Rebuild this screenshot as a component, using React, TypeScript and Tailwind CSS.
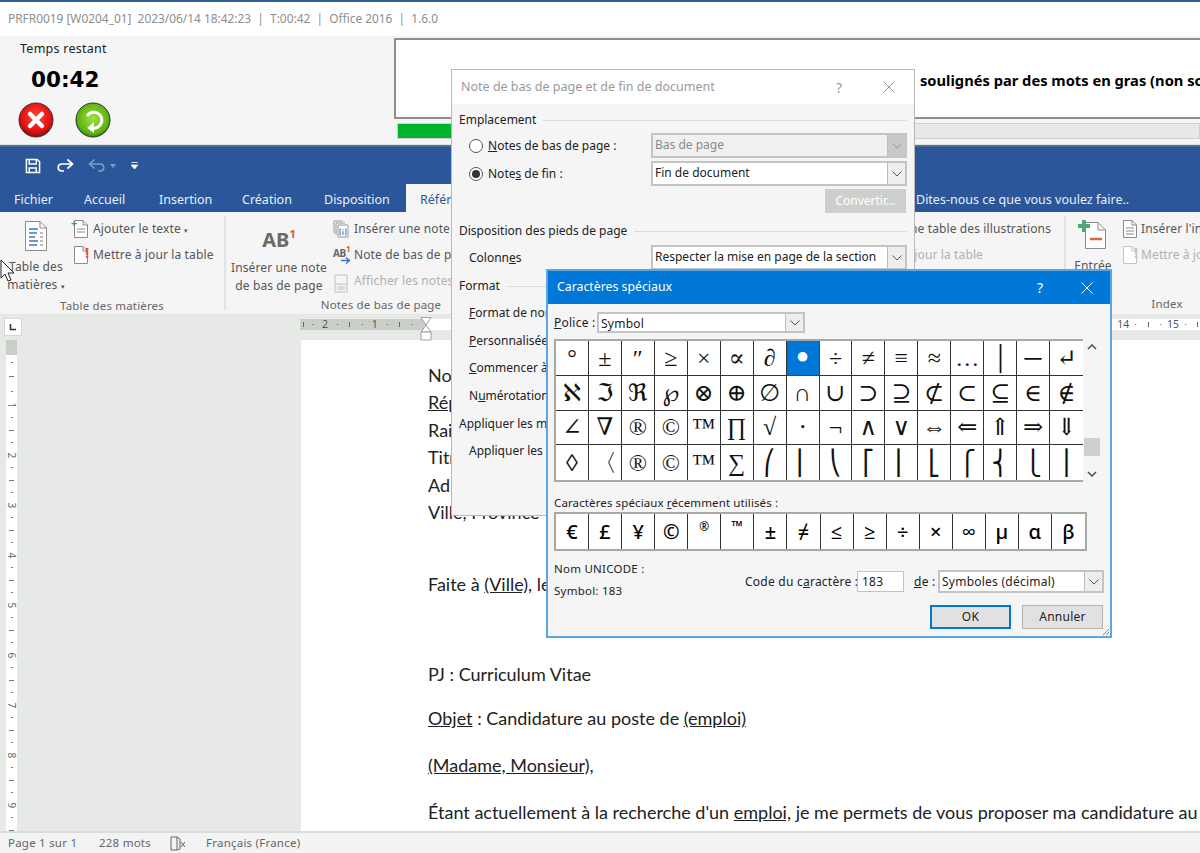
import React from "react";

const ui = "font-['Noto_Sans','Open_Sans',sans-serif]";

function Chevron({ color = "#555" }: { color?: string }) {
  return (
    <svg width="10" height="6" viewBox="0 0 10 6" fill="none">
      <path d="M0.5 0.5 L5 5 L9.5 0.5" stroke={color} strokeWidth="1" />
    </svg>
  );
}

function Select({ text, disabled, cls }: { text: string; disabled?: boolean; cls: string }) {
  return (
    <div className={`flex items-stretch border-2 ${disabled ? "border-[#c4c4c4] bg-[#f0f0f0] text-[#8a8a8a]" : "border-[#c4c4c4] bg-white text-[#222]"} ${cls}`}>
      <div className="flex-1 pl-[2px] leading-[20px] whitespace-nowrap overflow-hidden">{text}</div>
      <div className={`w-[18px] flex items-center justify-center border-l border-[#bdbdbd] ${disabled ? "bg-[#c8c8c8]" : "bg-[#eeeeee]"}`}>
        <Chevron color={disabled ? "#9a9a9a" : "#555"} />
      </div>
    </div>
  );
}

function SectionTitle({ text, cls = "" }: { text: string; cls?: string }) {
  return (
    <div className={`flex items-center gap-[7px] pl-[7px] pr-[7px] h-[16px] ${cls}`}>
      <span className="whitespace-nowrap text-[#222]">{text}</span>
      <span className="flex-1 h-px bg-[#dcdcdc]" />
    </div>
  );
}

const rows = [
  ["°", "±", "″", "≥", "×", "∝", "∂", "•", "÷", "≠", "≡", "≈", "…", "│", "─", "↵"],
  ["ℵ", "ℑ", "ℜ", "℘", "⊗", "⊕", "∅", "∩", "∪", "⊃", "⊇", "⊄", "⊂", "⊆", "∈", "∉"],
  ["∠", "∇", "®", "©", "™", "∏", "√", "⋅", "¬", "∧", "∨", "⇔", "⇐", "⇑", "⇒", "⇓"],
  ["◊", "〈", "®", "©", "™", "∑", "⎛", "⎜", "⎝", "⎡", "⎢", "⎣", "⎧", "⎨", "⎩", "⎪"],
];
const recent = ["€", "£", "¥", "©", "®", "™", "±", "≠", "≤", "≥", "÷", "×", "∞", "µ", "α", "β"];

function FileSvg({ w = 18, h = 20, stroke = "#8a8a8a", children }: { w?: number; h?: number; stroke?: string; children?: React.ReactNode }) {
  return (
    <svg width={w} height={h} viewBox="0 0 18 20" fill="none">
      <path d="M2.5 1.5 H11 L15.5 6 V18.5 H2.5 Z" fill="#fff" stroke={stroke} />
      <path d="M11 1.5 V6 H15.5" stroke={stroke} />
      {children}
    </svg>
  );
}

function RowItem({ icon, text, dim }: { icon: React.ReactNode; text: React.ReactNode; dim?: boolean }) {
  return (
    <div className={`flex items-center h-[26px] whitespace-nowrap ${dim ? "text-[#b0b0b0]" : "text-[#555]"}`}>
      {icon}
      <span>{text}</span>
    </div>
  );
}

function HRulerCell({ n }: { n: string }) {
  return (
    <div className="w-[49.86px] shrink-0 flex items-center text-[10.5px] leading-none">
      <span className="w-[12.5px] text-center">{n}</span>
      <span className="w-[12.5px] text-center text-[8px]">·</span>
      <span className="w-[12.5px] flex justify-center"><i className="w-px h-[5px] bg-[#666]" /></span>
      <span className="w-[12.5px] text-center text-[8px]">·</span>
    </div>
  );
}

function VRulerCell({ n }: { n: string }) {
  return (
    <div className="h-[50px] shrink-0 flex flex-col items-center text-[10px] leading-none text-[#666]">
      <span className="h-[12.5px] flex items-center justify-center rotate-90">{n}</span>
      <span className="h-[12.5px] flex items-center"><i className="w-[2px] h-[1px] bg-[#777]" /></span>
      <span className="h-[12.5px] flex items-center"><i className="w-[5px] h-[1px] bg-[#777]" /></span>
      <span className="h-[12.5px] flex items-center"><i className="w-[2px] h-[1px] bg-[#777]" /></span>
    </div>
  );
}

export default function App() {
  return (
    <div className={`relative w-[1200px] h-[853px] overflow-hidden flex flex-col bg-white ${ui}`}>
      {/* test tool title */}
      <div className="h-[36px] shrink-0 bg-white border-t-2 border-[#2f5f93] pl-[8px] text-[11.9px] leading-[32px] text-[#8e8e8e] whitespace-nowrap">
        PRFR0019 [W0204_01]&nbsp; 2023/06/14 18:42:23&nbsp; |&nbsp; T:00:42&nbsp; |&nbsp; Office 2016&nbsp; |&nbsp; 1.6.0
      </div>

      {/* timer + instruction */}
      <div className="h-[109px] shrink-0 bg-[#f5f5f5] flex border-b border-[#dfe3e0]">
        <div className="w-[394px] shrink-0 pl-[20px] pt-[5px]">
          <div className="text-[12.5px] leading-[16px] text-[#222] tracking-[0.02em]">Temps restant</div>
          <div className="pl-[11px] mt-[8px] text-[21.5px] leading-[30px] font-bold text-black font-['DejaVu_Sans',sans-serif]">00:42</div>
          <div className="flex gap-[21px] -ml-[2px] mt-[7px]">
            <svg width="36" height="36" viewBox="0 0 36 36">
              <defs>
                <radialGradient id="rg" cx="50%" cy="40%" r="60%">
                  <stop offset="0%" stopColor="#ff4a3a" />
                  <stop offset="75%" stopColor="#e00f0f" />
                  <stop offset="100%" stopColor="#8a0b0b" />
                </radialGradient>
              </defs>
              <circle cx="18" cy="18" r="17" fill="url(#rg)" stroke="#333" />
              <path d="M12 12 L24 24 M24 12 L12 24" stroke="#fff" strokeWidth="4.5" strokeLinecap="round" />
            </svg>
            <svg width="36" height="36" viewBox="0 0 36 36" fill="none">
              <defs>
                <radialGradient id="gg" cx="50%" cy="45%" r="60%">
                  <stop offset="0%" stopColor="#a6dd45" />
                  <stop offset="75%" stopColor="#5cb40f" />
                  <stop offset="100%" stopColor="#1f6a10" />
                </radialGradient>
              </defs>
              <circle cx="18" cy="18" r="17" fill="url(#gg)" stroke="#333" />
              <path d="M12 14 A8 8 0 1 1 17 26" stroke="#fff" strokeWidth="3" />
              <path d="M19 20 L19 31 L12 26 Z" fill="#fff" />
            </svg>
          </div>
        </div>
        <div className="flex-1 min-w-0 pt-[2px]">
          <div className="h-[81px] bg-white border-2 border-r-0 border-[#8f8f8f] flex items-center overflow-hidden">
            <span className="pl-[524px] pt-[4px] text-[14.7px] font-bold text-black whitespace-nowrap">soulignés par des mots en gras (non soulignés)</span>
          </div>
          <div className="mt-[4px] ml-[3px] h-[16px] bg-[#e6e9e6] border border-[#d0d0d0]">
            <div className="w-[80px] h-full bg-[#00b32c]" />
          </div>
        </div>
      </div>

      {/* Word blue header */}
      <div className="h-[67px] shrink-0 bg-[#2b579a] border-t-2 border-[#4a6f9f] flex flex-col text-white">
        <div className="h-[37px] flex items-center pl-[25px]">
          <svg width="16" height="16" viewBox="0 0 17 17" fill="none" stroke="#fff" strokeWidth="1.6">
            <path d="M1.5 1.5 H13 L15.5 4 V15.5 H1.5 Z" />
            <path d="M4.5 1.5 V6.5 H12 V1.5" />
            <path d="M4.5 15.5 V10.5 H12 V15.5" />
          </svg>
          <svg className="ml-[15px]" width="18" height="15" viewBox="0 0 18 15" fill="none" stroke="#fff" strokeWidth="1.7">
            <path d="M16 6 H6 C1 6 1 13 6 13 H8" />
            <path d="M11.5 1.5 L16.5 6 L11.5 10.5" />
          </svg>
          <svg className="ml-[14px]" width="18" height="15" viewBox="0 0 18 15" fill="none" stroke="#7f9cc6" strokeWidth="1.6">
            <path d="M2 6 H12 C17 6 17 13 12 13 H10" />
            <path d="M6.5 1.5 L1.5 6 L6.5 10.5" />
          </svg>
          <svg className="ml-[4px]" width="6" height="4" viewBox="0 0 6 4"><path d="M0 0 H6 L3 4 Z" fill="#7f9cc6" /></svg>
          <svg className="ml-[15px]" width="7" height="7" viewBox="0 0 7 7"><path d="M0.5 0.5 H6.5 M0 3 H7 L3.5 7 Z" stroke="#fff" fill="#fff" strokeWidth="0.8" /></svg>
        </div>
        <div className="flex-1 flex items-stretch text-[12.5px] text-[#e8eef7]">
          <div className="flex items-center pl-[14px] pt-[4px] w-[84px]">Fichier</div>
          <div className="flex items-center pt-[4px] w-[75px]">Accueil</div>
          <div className="flex items-center pt-[4px] w-[83px]">Insertion</div>
          <div className="flex items-center pt-[4px] w-[82px]">Création</div>
          <div className="flex items-center pt-[4px] w-[82px]">Disposition</div>
          <div className="flex items-center pl-[14px] pt-[4px] w-[180px] bg-[#f5f5f5] text-[#2b579a]">Références</div>
          <div className="flex items-center pl-[330px] pt-[4px] whitespace-nowrap">Dites-nous ce que vous voulez faire..</div>
        </div>
      </div>

      {/* Ribbon */}
      <div className="h-[103px] w-[1268px] shrink-0 bg-[#f5f5f5] flex text-[12px] tracking-[0.01em] text-[#555] border-b border-[#e3e6e3]">
        {/* TOC */}
        <div className="w-[226px] shrink-0 flex flex-col border-r-2 border-[#e2e2e2] my-[4px]">
          <div className="flex-1 flex">
            <div className="w-[72px] flex flex-col items-center pt-[4px]">
              <svg width="26" height="33" viewBox="0 0 26 33" fill="none">
                <path d="M2.5 1.5 H17 L23.5 8 V30.5 H2.5 Z" fill="#fff" stroke="#8a8a8a" />
                <path d="M17 1.5 V8 H23.5" stroke="#8a8a8a" />
                <path d="M6 9 H15 M6 13 H14 M6 17 H12 M6 21 H15 M6 25 H14" stroke="#3f77bd" strokeWidth="1.5" />
                <path d="M17 13 H20 M17 17 H20 M17 21 H20 M17 25 H20" stroke="#777" />
              </svg>
              <div className="mt-[5px] leading-[18px] text-center whitespace-nowrap">Table des<br />matières <span className="text-[7px]">▾</span></div>
            </div>
            <div>
              <RowItem
                icon={<span className="relative w-[21px]"><FileSvg><path d="M5 10 H13 M5 13 H13" stroke="#8a8a8a" /></FileSvg><span className="absolute -top-[2px] -left-[1px] text-[#3f9c63] text-[11px] font-bold leading-none">+</span></span>}
                text={<>Ajouter le texte <span className="text-[7px]">▾</span></>}
              />
              <RowItem
                icon={<span className="relative w-[21px]"><FileSvg /><span className="absolute top-[0px] left-[13px] text-[#e0533a] text-[15px] font-bold leading-none">!</span></span>}
                text="Mettre à jour la table"
              />
            </div>
          </div>
          <div className="h-[16px] text-center text-[11.5px] leading-[20px] tracking-[0.015em] text-[#666]">Table des matières</div>
        </div>
        {/* Notes */}
        <div className="w-[310px] shrink-0 flex flex-col my-[4px]">
          <div className="flex-1 flex">
            <div className="w-[106px] flex flex-col items-center pt-[11px]">
              <div className="h-[26px] flex items-start font-bold text-[20px] leading-[26px] text-[#6a6a6a] tracking-normal">
                AB<span className="text-[11px] leading-[14px] text-[#e0533a]">1</span>
              </div>
              <div className="mt-[6px] leading-[18px] text-center whitespace-nowrap">Insérer une note<br />de bas de page</div>
            </div>
            <div className="pl-[1px]">
              <RowItem
                icon={<svg className="mr-[4px]" width="17" height="18" viewBox="0 0 17 18" fill="none"><path d="M1 1 H10 M3 3 H12 M1 1 V13 M3 3 V15" stroke="#9a9a9a" /><path d="M5 5 H15 V17 H5 Z" fill="#fff" stroke="#9a9a9a" /><path d="M8 9 H7 V15 H8 M12 9 H13 V15 H12 M10 9 V10 M10 11 V15" stroke="#3f77bd" /></svg>}
                text="Insérer une note de fin"
              />
              <RowItem
                icon={<span className="relative w-[21px] h-[18px] text-[10px] font-bold leading-[14px] tracking-tighter text-[#666]">AB<span className="absolute -top-[1px] left-[13px] text-[8px] leading-none text-[#e0533a]">1</span><svg className="absolute left-[8px] top-[11px]" width="10" height="7" viewBox="0 0 10 7" fill="none"><path d="M0 3.5 H8 M5 .5 L8.5 3.5 L5 6.5" stroke="#3f77bd" strokeWidth="1.4" /></svg></span>}
                text="Note de bas de page suivante"
              />
              <RowItem
                dim
                icon={<svg className="mr-[4px] mt-[4px]" width="17" height="19" viewBox="0 0 17 19" fill="none" stroke="#c0c0c0"><path d="M2 1 H14 V18 H2 Z" /><path d="M2 10 H14 M4 13 H12 M4 15 H12" /></svg>}
                text="Afficher les notes"
              />
            </div>
          </div>
          <div className="h-[16px] text-center text-[11.5px] leading-[20px] tracking-[0.015em] text-[#666]">Notes de bas de page</div>
        </div>
        {/* Captions */}
        <div className="flex-1 min-w-0 flex flex-col items-end my-[4px] pr-[13px] border-r-2 border-[#e2e2e2] whitespace-nowrap">
          <div className="h-[26px] leading-[26px]">Insérer une table des illustrations</div>
          <div className="h-[26px] leading-[26px] pr-[68px] text-[#b0b0b0]">Mettre à jour la table</div>
        </div>
        {/* Index */}
        <div className="w-[202px] shrink-0 flex flex-col my-[4px] overflow-hidden">
          <div className="flex-1 flex whitespace-nowrap">
            <div className="w-[54px] shrink-0 flex flex-col items-center pt-[2px]">
              <svg width="32" height="34" viewBox="0 0 32 34" fill="none">
                <path d="M8.5 4.5 H21 L28.5 12 V30.5 H8.5 Z" fill="#fff" stroke="#8a8a8a" />
                <path d="M21 4.5 V12 H28.5" stroke="#8a8a8a" />
                <path d="M1 8 H13 M7 2 V14" stroke="#4fa67a" strokeWidth="4" />
                <path d="M13 21 H25" stroke="#e0623f" strokeWidth="2.5" />
              </svg>
              <div className="mt-[5px] leading-[18px]">Entrée</div>
            </div>
            <div className="pl-[1px]">
              <RowItem icon={<span className="w-[20px]"><FileSvg><path d="M5 9 H13 M5 12 H13 M5 15 H13" stroke="#8a8a8a" /></FileSvg></span>} text="Insérer l'index" />
              <RowItem dim icon={<span className="relative w-[20px]"><FileSvg stroke="#c4c4c4" /><span className="absolute top-[1px] left-[13px] text-[#c4c4c4] text-[14px] font-bold leading-none">!</span></span>} text="Mettre à jour l'index" />
            </div>
          </div>
          <div className="h-[16px] text-center text-[11.5px] leading-[20px] tracking-[0.015em] text-[#666]">Index</div>
        </div>
      </div>

      {/* Ruler row */}
      <div className="h-[25px] shrink-0 bg-[#e6e9e6] flex text-[#555] relative">
        <div className="w-[300px] shrink-0 pl-[4px] pt-[3px]">
          <div className="w-[18px] h-[18px] bg-white border border-[#d8d8d8] flex items-center justify-center">
            <svg width="8" height="8" viewBox="0 0 8 8" fill="none"><path d="M1.5 1 V6.5 H7" stroke="#333" strokeWidth="1.6" /></svg>
          </div>
        </div>
        <div className="flex-1 min-w-0 flex items-start pt-[4px] overflow-hidden">
          <div className="w-[125px] h-[11px] shrink-0 bg-[#c9cec9] flex items-center overflow-hidden">
            <span className="w-[6.75px] flex justify-center"><i className="w-px h-[5px] bg-[#666]" /></span>
            <span className="w-[12px] text-center text-[8px] leading-none">·</span>
            <HRulerCell n="2" />
            <HRulerCell n="1" />
          </div>
          <div className="h-[11px] flex-1 bg-white flex items-center overflow-hidden">
            <div className="w-[43.75px] shrink-0" />
            {Array.from({ length: 15 }, (_, i) => <HRulerCell key={i} n={String(i + 1)} />)}
          </div>
        </div>
        <svg className="absolute left-[420px] top-[2px]" width="12" height="24" viewBox="0 0 12 24" fill="#fff" stroke="#a0a0a0">
          <path d="M1 .5 H11 L6 8 Z" />
          <path d="M1 15 L6 8 L11 15 Z" />
          <path d="M1 15 H11 V23 H1 Z" />
        </svg>
      </div>

      {/* Document */}
      <div className="flex-1 min-h-0 flex bg-[#e6e9e6] overflow-hidden">
        <div className="w-[301px] shrink-0 pl-[6px]">
          <div className="w-[11px] h-full bg-white overflow-hidden">
            <div className="h-[15px] bg-[#c9cec9]" />
            <div className="flex flex-col">
              <div className="h-[44px] shrink-0 flex flex-col items-center justify-around">
                <i className="w-[2px] h-px bg-[#777]" /><i className="w-[5px] h-px bg-[#777]" /><i className="w-[2px] h-px bg-[#777]" />
              </div>
              {Array.from({ length: 10 }, (_, i) => <VRulerCell key={i} n={String(i + 1)} />)}
            </div>
          </div>
        </div>
        <div className="flex-1 bg-white pl-[127px] pt-[22px] font-['Lato','Liberation_Sans',sans-serif] text-[18px] leading-[27.4px] text-[#222] whitespace-nowrap overflow-hidden">
          <div>Nom Prénom</div>
          <div><u>Réponse à l'annonce</u></div>
          <div>Raison sociale</div>
          <div>Titre</div>
          <div>Adresse</div>
          <div>Ville, Province</div>
          <div className="mt-[45px]">Faite à <u>(Ville),</u> le (date)</div>
          <div className="mt-[62px]">PJ : Curriculum Vitae</div>
          <div className="mt-[17px]"><u>Objet</u> : Candidature au poste de <u>(emploi)</u></div>
          <div className="mt-[19px]"><u>(Madame, Monsieur),</u></div>
          <div className="mt-[20px]">Étant actuellement à la recherche d'un <u>emploi,</u> je me permets de vous proposer ma candidature au</div>
          <div>poste de (emploi).</div>
        </div>
      </div>

      {/* Status bar */}
      <div className="h-[22px] shrink-0 bg-[#f3f3f3] border-t-2 border-[#d9dcd9] flex items-center text-[11.5px] tracking-[0.02em] text-[#666]">
        <span className="ml-[8px] w-[91px]">Page 1 sur 1</span>
        <span className="w-[71px]">228 mots</span>
        <svg width="16" height="15" viewBox="0 0 16 15" fill="none" stroke="#666"><path d="M1 1 H7 V14 H1 Z M7 1 L10 3 V13 L7 14" /><path d="M11 6 L15 11 M15 6 L11 11" /></svg>
        <span className="ml-[20px]">Français (France)</span>
      </div>

      {/* Notes dialog */}
      <div className="absolute left-[451px] top-[69px] w-[464px] h-[447px] border border-[#b9b9b9] bg-[#f5f5f5] text-[12px] text-[#222] flex flex-col overflow-hidden">
        <div className="h-[34px] shrink-0 bg-white flex items-center pl-[9px] text-[12.5px] text-[#9a9a9a]">
          <span className="flex-1">Note de bas de page et de fin de document</span>
          <span className="w-[14px] text-[14px] text-[#999]">?</span>
          <svg className="ml-[33px] mr-[19px]" width="12" height="12" viewBox="0 0 12 12" stroke="#999"><path d="M.5 .5 L11.5 11.5 M11.5 .5 L.5 11.5" /></svg>
        </div>
        <SectionTitle text="Emplacement" cls="mt-[8px]" />
        <div className="flex items-center mt-[5px] h-[25px] pl-[17px] pr-[7px]">
          <span className="w-[14px] h-[14px] rounded-full border border-[#555] bg-white" />
          <span className="ml-[5px] flex-1"><u>N</u>otes de bas de page :</span>
          <Select disabled text="Bas de page" cls="w-[256px] h-[25px]" />
        </div>
        <div className="flex items-center mt-[3px] h-[25px] pl-[17px] pr-[7px]">
          <span className="w-[14px] h-[14px] rounded-full border border-[#555] bg-white flex items-center justify-center"><i className="w-[8px] h-[8px] rounded-full bg-[#333]" /></span>
          <span className="ml-[5px] flex-1">Note<u>s</u> de fin :</span>
          <Select text="Fin de document" cls="w-[256px] h-[25px]" />
        </div>
        <div className="flex justify-end mt-[3px] pr-[8px]">
          <div className="w-[81px] h-[24px] bg-[#cdcfcd] text-white text-center leading-[24px]">Convertir...</div>
        </div>
        <SectionTitle text="Disposition des pieds de page" cls="mt-[10px]" />
        <div className="flex items-center mt-[6px] h-[25px] pl-[17px] pr-[7px]">
          <span className="flex-1">Colonn<u>e</u>s</span>
          <Select text="Respecter la mise en page de la section" cls="w-[256px] h-[25px]" />
        </div>
        <SectionTitle text="Format" cls="mt-[8px]" />
        <div className="pl-[17px] mt-[11px] leading-[16px] flex flex-col gap-[11.5px]">
          <span><u>F</u>ormat de nombre :</span>
          <span><u>P</u>ersonnalisée :</span>
          <span><u>C</u>ommencer à :</span>
          <span>N<u>u</u>mérotation :</span>
        </div>
        <div className="pl-[7px] mt-[12px] leading-[16px] whitespace-nowrap">Appliquer les modifications</div>
        <div className="pl-[17px] mt-[11px] leading-[16px] whitespace-nowrap">Appliquer les modifications à :</div>
      </div>

      {/* Symbols dialog */}
      <div className="absolute left-[546px] top-[269px] w-[566px] h-[369px] border-2 border-[#5ba6e2] bg-[#f5f5f5] text-[12px] tracking-[0.02em] text-[#222] flex flex-col">
        <div className="h-[33px] shrink-0 bg-[#0078d7] text-white flex items-center pl-[9px] text-[12.3px] tracking-normal">
          <span className="flex-1">Caractères spéciaux</span>
          <span className="w-[14px] text-[14px]">?</span>
          <svg className="ml-[30px] mr-[17px]" width="12" height="12" viewBox="0 0 12 12" stroke="#fff"><path d="M.5 .5 L11.5 11.5 M11.5 .5 L.5 11.5" /></svg>
        </div>
        <div className="flex items-center pl-[6px] mt-[8px] h-[21px]">
          <span className="w-[43px]"><u>P</u>olice :</span>
          <Select text="Symbol" cls="w-[208px] h-[21px]" />
        </div>
        <div className="flex mt-[6px] pl-[6px]">
          <div className="w-[529px] h-[143px] border-t-2 border-l-2 border-b-2 border-[#a8a8a8] bg-white grid grid-cols-[repeat(16,1fr)] grid-rows-[repeat(4,1fr)] font-['Liberation_Serif','DejaVu_Sans_ExtraLight','DejaVu_Serif','DejaVu_Sans',serif] text-[24px] text-[#111] tracking-normal overflow-hidden">
            {rows.flatMap((row, r) =>
              row.map((ch, c) => {
                const sel = r === 0 && c === 7;
                return (
                  <div
                    key={`${r}-${c}`}
                    className={`flex items-center justify-center overflow-hidden leading-none ${r < 3 ? "border-b" : ""} ${c < 15 ? "border-r" : ""} border-[#333] ${sel ? "bg-[#0078d7] text-white text-[40px] outline-1 outline-dotted -outline-offset-1 outline-[#7a4a1a]" : ""}`}
                  >
                    {ch}
                  </div>
                );
              })
            )}
          </div>
          <div className="w-[18px] h-[143px] flex flex-col items-center pt-[5px]">
            <svg width="10" height="6" viewBox="0 0 10 6" fill="none"><path d="M1 5 L5 1 L9 5" stroke="#555" strokeWidth="1.6" /></svg>
            <div className="w-[16px] h-[18px] shrink-0 bg-[#cdd0cd] mt-[88px]" />
            <svg className="mt-[15px] shrink-0" width="10" height="6" viewBox="0 0 10 6" fill="none"><path d="M1 1 L5 5 L9 1" stroke="#555" strokeWidth="1.6" /></svg>
          </div>
        </div>
        <div className="pl-[6px] mt-[13px] h-[16px] leading-[16px] text-[11.5px] tracking-[0.01em]">Caractères spéciaux <u>r</u>écemment utilisés :</div>
        <div className="ml-[6px] mt-[1px] w-[533px] h-[39px] border-2 border-[#a8a8a8] bg-white grid grid-cols-[repeat(16,1fr)] text-[20px] font-medium tracking-normal text-black">
          {recent.map((ch, i) => (
            <div key={i} className={`flex items-center justify-center ${i === 4 ? "text-[12px] pb-[10px]" : ""} ${i === 5 ? "text-[15px] pb-[10px]" : ""} ${i < 15 ? "border-r border-[#333]" : ""}`}>{ch}</div>
          ))}
        </div>
        <div className="flex pl-[6px] mt-[7px]">
          <div className="w-[191px] text-[11.5px] leading-[22px]">
            <div>Nom UNICODE :</div>
            <div>Symbol: 183</div>
          </div>
          <div className="flex items-center h-[21px] mt-[13px] whitespace-nowrap">
            <span className="w-[112px]">Code du c<u>a</u>ractère :</span>
            <div className="w-[47px] h-[21px] bg-white border border-[#c4c4c4] pl-[4px] leading-[19px]">183</div>
            <span className="ml-[10px] w-[24px]"><u>d</u>e :</span>
            <Select text="Symboles (décimal)" cls="w-[166px] h-[23px]" />
          </div>
        </div>
        <div className="flex justify-end gap-[11px] pr-[7px] mt-[3px]">
          <div className="w-[81px] h-[24px] border-2 border-[#0078d7] bg-[#e1e1e1] text-center leading-[20px]">OK</div>
          <div className="w-[81px] h-[24px] border border-[#b5b5b5] bg-[#e1e1e1] text-center leading-[22px]">Annuler</div>
        </div>
        <svg className="absolute right-0 bottom-0" width="10" height="10" viewBox="0 0 10 10" stroke="#8a8a8a"><path d="M9 3 L3 9 M9 6 L6 9" /></svg>
      </div>

      {/* mouse cursor */}
      <svg className="absolute left-0 top-[259px]" width="16" height="26" viewBox="0 0 16 26">
        <path d="M1 1 V19 L5 15 L8 22 L11 21 L8 14 H14 Z" fill="#fff" stroke="#222" />
      </svg>
    </div>
  );
}
